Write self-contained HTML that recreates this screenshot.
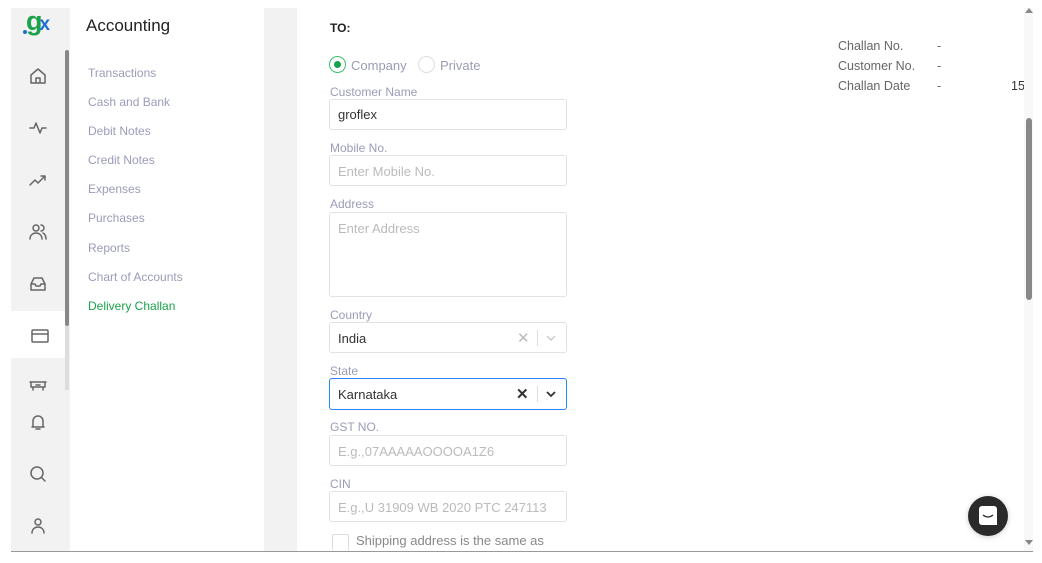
<!DOCTYPE html>
<html><head><meta charset="utf-8"><style>
*{margin:0;padding:0;box-sizing:border-box}
body{width:1042px;height:563px;background:#fff;font-family:"Liberation Sans",sans-serif;position:relative;overflow:hidden}
.a{position:absolute}
.rail{left:11px;top:8px;width:59px;height:543px;background:#f2f2f2}
.ic{position:absolute;left:28px;width:20px;height:20px}
.ic svg{width:20px;height:20px;fill:none;stroke:#666;stroke-width:1.5;stroke-linecap:round;stroke-linejoin:round}
.menu{left:88px;font-size:12px;color:#9a9cb8}
.lbl{left:330px;font-size:12px;color:#9a9cb8}
.inp{left:329px;width:238px;height:31px;border:1px solid #e2e2e6;border-radius:3px;font-size:13px;padding:0 8px;line-height:29px;color:#333;background:#fff}
.ph{color:#bbb}
.r{left:838px;font-size:12.5px;color:#666}
</style></head><body>
<div class="a rail"></div>
<div class="a" style="left:11px;top:311px;width:54px;height:47px;background:#fff"></div>
<div class="a" style="left:65px;top:50px;width:4px;height:276px;background:#888;border-radius:2px"></div>
<div class="a" style="left:65px;top:326px;width:4px;height:64px;background:#ddd"></div>
<div class="a" style="left:264px;top:8px;width:33px;height:543px;background:#f2f2f2"></div>
<div class="a" style="left:11px;top:551px;width:1022px;height:1px;background:#999"></div>
<!-- logo -->
<div class="a" style="left:26px;top:8px;font-weight:bold;font-size:27px;color:#1aa34a;line-height:26px;letter-spacing:-3px">g<span style="color:#1e6fd0;font-size:19px">x</span></div>
<div class="a" style="left:23px;top:30px;width:4px;height:4px;background:#1e6fd0;border-radius:50%"></div>
<!-- icons -->
<div class="ic" style="top:66px"><svg viewBox="0 0 20 20"><path d="M3 9l7-6 7 6v8H3z M8 17v-5h4v5"/></svg></div>
<div class="ic" style="top:118px"><svg viewBox="0 0 20 20"><path d="M2 10h4l2-5 4 10 2-5h4"/></svg></div>
<div class="ic" style="top:170px"><svg viewBox="0 0 20 20"><path d="M2 15l5-5 3 3 7-7 M13 6h4v4"/></svg></div>
<div class="ic" style="top:222px"><svg viewBox="0 0 20 20"><circle cx="8" cy="6" r="3"/><path d="M2 17c0-4 3-6 6-6s6 2 6 6 M13 3a3 3 0 0 1 0 6 M15 11c2 1 3 3 3 6"/></svg></div>
<div class="ic" style="top:274px"><svg viewBox="0 0 20 20"><path d="M3 10l3-6h8l3 6v6H3z M3 10h4l1 2h4l1-2h4"/></svg></div>
<div class="ic" style="top:326px;left:30px"><svg viewBox="0 0 20 20"><rect x="2" y="4" width="16" height="12" rx="1"/><path d="M2 8h16"/></svg></div>
<div class="ic" style="top:375px"><svg viewBox="0 0 20 20"><path d="M2 7h16 M3 7v5h14V7 M5 12v3 M15 12v3 M8 10h4"/></svg></div>
<div class="ic" style="top:412px"><svg viewBox="0 0 20 20"><path d="M5 14V9a5 5 0 0 1 10 0v5l1 1H4z M8 17h4"/></svg></div>
<div class="ic" style="top:464px"><svg viewBox="0 0 20 20"><circle cx="9" cy="9" r="6"/><path d="M13.5 13.5L17 17"/></svg></div>
<div class="ic" style="top:516px"><svg viewBox="0 0 20 20"><circle cx="10" cy="6" r="3"/><path d="M4 17c0-4 3-6 6-6s6 2 6 6"/></svg></div>
<!-- menu -->
<div class="a" style="left:86px;top:16px;font-size:17px;color:#222">Accounting</div>
<div class="a menu" style="top:66px">Transactions</div>
<div class="a menu" style="top:95px">Cash and Bank</div>
<div class="a menu" style="top:124px">Debit Notes</div>
<div class="a menu" style="top:153px">Credit Notes</div>
<div class="a menu" style="top:182px">Expenses</div>
<div class="a menu" style="top:211px">Purchases</div>
<div class="a menu" style="top:241px">Reports</div>
<div class="a menu" style="top:270px">Chart of Accounts</div>
<div class="a menu" style="top:299px;color:#1aa34a">Delivery Challan</div>
<!-- form -->
<div class="a" style="left:330px;top:21px;font-size:12px;font-weight:bold;color:#222">TO:</div>
<div class="a" style="left:329px;top:56px;width:17px;height:17px;border:1px solid #3cbf6a;border-radius:50%"></div>
<div class="a" style="left:334px;top:61px;width:7px;height:7px;background:#16a34a;border-radius:50%"></div>
<div class="a" style="left:351px;top:58px;font-size:13px;color:#9a9cb8">Company</div>
<div class="a" style="left:418px;top:56px;width:17px;height:17px;border:1px solid #ddd;border-radius:50%"></div>
<div class="a" style="left:440px;top:58px;font-size:13px;color:#9a9cb8">Private</div>
<div class="a lbl" style="top:85px">Customer Name</div>
<div class="a inp" style="top:99px">groflex</div>
<div class="a lbl" style="top:141px">Mobile No.</div>
<div class="a inp ph" style="top:155px;line-height:31px">Enter Mobile No.</div>
<div class="a lbl" style="top:197px">Address</div>
<div class="a inp ph" style="top:212px;height:85px;line-height:32px">Enter Address</div>
<div class="a lbl" style="top:308px">Country</div>
<div class="a inp" style="top:322px;line-height:31px">India<span class="a" style="left:187px;top:0;color:#bbb;font-size:15px">✕</span><span class="a" style="left:207px;top:7px;width:1px;height:16px;background:#ddd"></span><svg class="a" style="left:215px;top:9px" width="12" height="12" viewBox="0 0 12 12"><path d="M2 4l4 4 4-4" fill="none" stroke="#ccc" stroke-width="1.5"/></svg></div>
<div class="a lbl" style="top:364px">State</div>
<div class="a inp" style="top:378px;border:1.5px solid #2684ff;height:32px;line-height:31px">Karnataka<span class="a" style="left:186px;top:0;color:#333;font-size:15px;font-weight:bold">✕</span><span class="a" style="left:207px;top:7px;width:1px;height:16px;background:#ddd"></span><svg class="a" style="left:215px;top:9px" width="12" height="12" viewBox="0 0 12 12"><path d="M2 4l4 4 4-4" fill="none" stroke="#333" stroke-width="1.8"/></svg></div>
<div class="a lbl" style="top:420px">GST NO.</div>
<div class="a inp ph" style="top:435px;line-height:31px">E.g.,07AAAAAOOOOA1Z6</div>
<div class="a lbl" style="top:477px">CIN</div>
<div class="a inp ph" style="top:491px;line-height:31px">E.g.,U 31909 WB 2020 PTC 247113</div>
<div class="a" style="left:332px;top:534px;width:17px;height:17px;border:1px solid #ddd;border-radius:2px;border-bottom:none"></div>
<div class="a" style="left:356px;top:533px;font-size:13px;color:#888;height:18px;overflow:hidden">Shipping address is the same as</div>
<!-- right -->
<div class="a r" style="top:39px">Challan No.</div><div class="a r" style="left:937px;top:39px">-</div>
<div class="a r" style="top:59px">Customer No.</div><div class="a r" style="left:937px;top:59px">-</div>
<div class="a r" style="top:79px">Challan Date</div><div class="a r" style="left:937px;top:79px">-</div>
<div class="a" style="left:1011px;top:79px;font-size:12.5px;color:#333">15</div>
<!-- scrollbar -->
<div class="a" style="left:1024px;top:8px;width:9px;height:543px;background:#f8f8f8"></div>
<div class="a" style="left:1026px;top:118px;width:6px;height:182px;background:#888;border-radius:3px"></div>
<div class="a" style="left:1025px;top:8px;width:0;height:0;border:4px solid transparent;border-bottom:5px solid #888;border-top:none"></div>
<div class="a" style="left:1025px;top:540px;width:0;height:0;border:4px solid transparent;border-top:5px solid #888;border-bottom:none"></div>
<!-- chat -->
<div class="a" style="left:968px;top:496px;width:40px;height:40px;border-radius:50%;background:#2a2a2a;box-shadow:0 1px 6px rgba(0,0,0,.2)"></div>
<div class="a" style="left:979px;top:506px;width:18px;height:19px;background:#fff;border-radius:3px 3px 0 3px"></div>
<svg class="a" style="left:982px;top:513px" width="12" height="6"><path d="M1 2q5 4 10 0" fill="none" stroke="#2a2a2a" stroke-width="1.3"/></svg>
</body></html>
